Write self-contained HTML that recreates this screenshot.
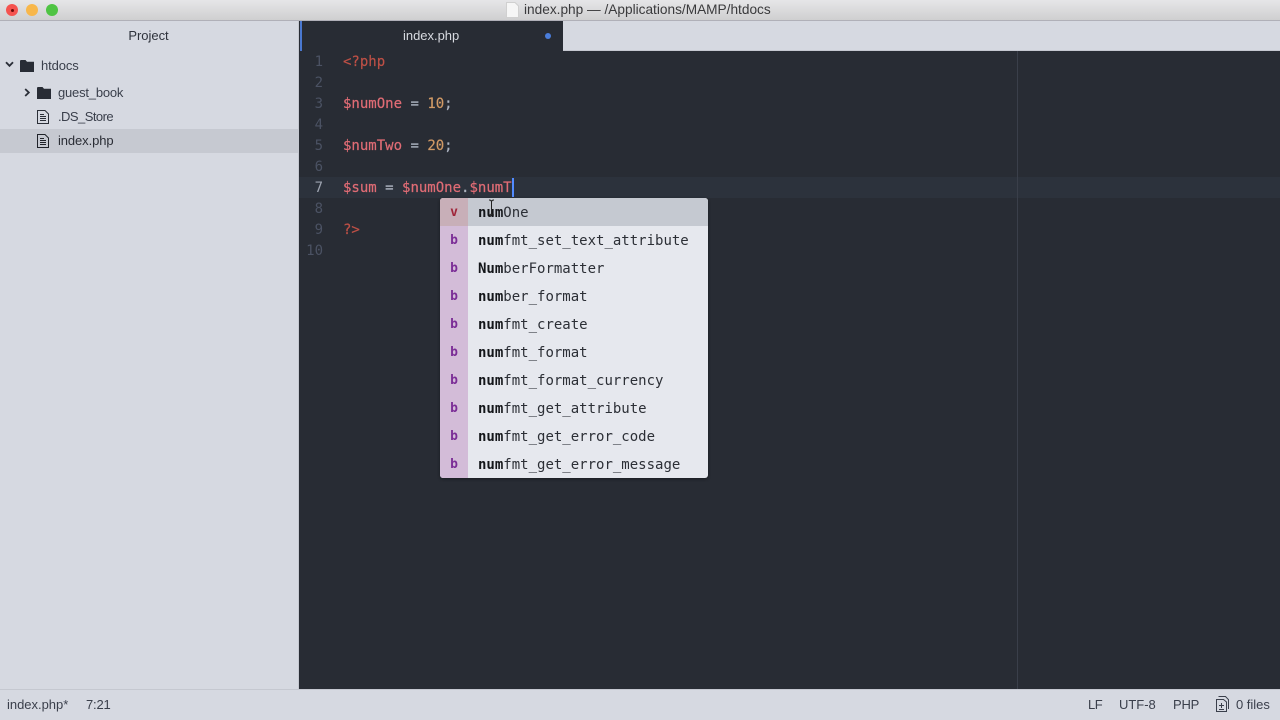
<!DOCTYPE html>
<html><head><meta charset="utf-8"><style>
html,body{margin:0;padding:0;width:1280px;height:720px;overflow:hidden;background:#282c34;font-family:"Liberation Sans",sans-serif}
.a{position:absolute;white-space:pre}
.m{font-family:"DejaVu Sans Mono","Liberation Mono",monospace;font-size:14px;line-height:21px;margin-top:1px;-webkit-text-stroke:.2px}
.r{color:#e06c75}.d{color:#be5046}.o{color:#d19a66}.w{color:#abb2bf}
.ln{color:#4b5263;width:24px;text-align:right;left:299px;-webkit-text-stroke:0}
.s{font-size:13px;line-height:20px;color:#3a3f4b;margin-top:1px;letter-spacing:-.02px}
.t{left:478px;color:#2c2f36;font-family:"DejaVu Sans Mono",monospace;font-size:14px;line-height:28px;margin-top:1px}
.t b{color:#14161a}
.k{left:440px;width:28px;text-align:center;font-family:"DejaVu Sans Mono",monospace;font-weight:bold;font-size:13px;line-height:28px;color:#7b2d96;margin-top:1px}
</style></head><body>
<!-- title bar -->
<div class="a" style="left:0;top:0;width:1280px;height:20px;background:linear-gradient(#e6e6e8,#cfcfd0);border-bottom:1px solid #b0b0b8"></div>
<div class="a" style="left:6px;top:4px;width:12px;height:12px;border-radius:50%;background:#f5534f"></div>
<div class="a" style="left:10.5px;top:8.5px;width:3px;height:3px;border-radius:50%;background:#6b0a08"></div>
<div class="a" style="left:26px;top:4px;width:12px;height:12px;border-radius:50%;background:#f8b74a"></div>
<div class="a" style="left:46px;top:4px;width:12px;height:12px;border-radius:50%;background:#4fc443"></div>
<svg class="a" style="left:506px;top:2px" width="13" height="16"><path d="M.5.5H9L12.5 4V15.5H.5Z" fill="#f6f6f6" stroke="#d0d0d0"/></svg>
<div class="a" style="left:524px;top:0;font-size:13.67px;line-height:20px;color:#3a3a3c">index.php — /Applications/MAMP/htdocs</div>
<!-- sidebar -->
<div class="a" style="left:0;top:21px;width:299px;height:668px;background:#d6d9e1"></div>
<div class="a" style="left:298px;top:21px;width:1px;height:668px;background:#c5c8d0"></div>
<div class="a s" style="left:0;width:297px;text-align:center;top:25px;color:#2f333c">Project</div>
<svg class="a" style="left:5px;top:61px" width="9" height="7"><path d="M1 1.2L4.5 4.8L8 1.2" fill="none" stroke="#2b2f38" stroke-width="1.8"/></svg>
<svg class="a" style="left:20px;top:60px" width="14" height="12"><path d="M0 1.2Q0 0 1 0H5.5L7 1.8H14V12H0Z" fill="#282c35"/></svg>
<div class="a s" style="left:41px;top:55px;letter-spacing:-.1px">htdocs</div>
<svg class="a" style="left:24px;top:88px" width="7" height="9"><path d="M1.2 1L4.8 4.5L1.2 8" fill="none" stroke="#2b2f38" stroke-width="1.8"/></svg>
<svg class="a" style="left:37px;top:87px" width="14" height="12"><path d="M0 1.2Q0 0 1 0H5.5L7 1.8H14V12H0Z" fill="#282c35"/></svg>
<div class="a s" style="left:58px;top:82px;letter-spacing:-.2px">guest_book</div>
<svg class="a" style="left:37px;top:110px" width="12" height="14"><path d="M.5.5H8L11.5 4V13.5H.5ZM3 4.5H7M3 6.5H9M3 8.5H9M3 10.5H9" fill="none" stroke="#2b2f38" stroke-width="1"/></svg>
<div class="a s" style="left:58px;top:106px;letter-spacing:-.55px">.DS_Store</div>
<div class="a" style="left:0;top:129px;width:298px;height:24px;background:#c6c9d1"></div>
<svg class="a" style="left:37px;top:134px" width="12" height="14"><path d="M.5.5H8L11.5 4V13.5H.5ZM3 4.5H7M3 6.5H9M3 8.5H9M3 10.5H9" fill="none" stroke="#1f2229" stroke-width="1"/></svg>
<div class="a s" style="left:58px;top:130px;color:#2a2d35;letter-spacing:-.1px">index.php</div>
<!-- tab bar -->
<div class="a" style="left:299px;top:21px;width:981px;height:30px;background:#d6d9e1;border-bottom:1px solid #c5c8d0;box-sizing:border-box"></div>
<div class="a" style="left:299px;top:21px;width:264px;height:30px;background:#282c34"></div>
<div class="a" style="left:300px;top:21px;width:2px;height:30px;background:#4a78d0"></div>
<div class="a s" style="left:403px;top:25px;color:#d7dae0">index.php</div>
<div class="a" style="left:545px;top:33px;width:6px;height:6px;border-radius:50%;background:#4a7ddb"></div>
<!-- editor -->
<div class="a" style="left:299px;top:177px;width:981px;height:21px;background:#2c323c"></div>
<div class="a" style="left:1017px;top:51px;width:1px;height:638px;background:#3a3f4a"></div>
<div class="a m ln" style="top:51px">1</div><div class="a m ln" style="top:72px">2</div><div class="a m ln" style="top:93px">3</div><div class="a m ln" style="top:114px">4</div><div class="a m ln" style="top:135px">5</div><div class="a m ln" style="top:156px">6</div><div class="a m ln" style="top:177px;color:#9da3af">7</div><div class="a m ln" style="top:198px">8</div><div class="a m ln" style="top:219px">9</div><div class="a m ln" style="top:240px">10</div>
<div class="a m d" style="left:343px;top:51px">&lt;?php</div>
<div class="a m" style="left:343px;top:93px"><span class="r">$numOne</span><span class="w"> = </span><span class="o">10</span><span class="w">;</span></div>
<div class="a m" style="left:343px;top:135px"><span class="r">$numTwo</span><span class="w"> = </span><span class="o">20</span><span class="w">;</span></div>
<div class="a m" style="left:343px;top:177px"><span class="r">$sum</span><span class="w"> = </span><span class="r">$numOne</span><span class="w">.</span><span class="r">$numT</span></div>
<div class="a" style="left:512px;top:178px;width:2px;height:19px;background:#528bff"></div>
<div class="a m d" style="left:343px;top:219px">?&gt;</div>
<!-- autocomplete -->
<div class="a" style="left:440px;top:198px;width:268px;height:280px;background:#e6e8ee;border-radius:3px;overflow:hidden;box-shadow:0 1px 3px rgba(0,0,0,.4)">
<div style="position:absolute;left:0;top:0;width:28px;height:280px;background:#d3bcd8"></div>
<div style="position:absolute;left:0;top:0;width:28px;height:28px;background:#c8afb8"></div>
<div style="position:absolute;left:28px;top:0;width:240px;height:28px;background:#c5c9d1"></div>
</div>
<div class="a k" style="top:198px;color:#a0263a">v</div><div class="a t" style="top:198px"><b>num</b>One</div>
<div class="a k" style="top:226px">b</div><div class="a t" style="top:226px"><b>num</b>fmt_set_text_attribute</div>
<div class="a k" style="top:254px">b</div><div class="a t" style="top:254px"><b>Num</b>berFormatter</div>
<div class="a k" style="top:282px">b</div><div class="a t" style="top:282px"><b>num</b>ber_format</div>
<div class="a k" style="top:310px">b</div><div class="a t" style="top:310px"><b>num</b>fmt_create</div>
<div class="a k" style="top:338px">b</div><div class="a t" style="top:338px"><b>num</b>fmt_format</div>
<div class="a k" style="top:366px">b</div><div class="a t" style="top:366px"><b>num</b>fmt_format_currency</div>
<div class="a k" style="top:394px">b</div><div class="a t" style="top:394px"><b>num</b>fmt_get_attribute</div>
<div class="a k" style="top:422px">b</div><div class="a t" style="top:422px"><b>num</b>fmt_get_error_code</div>
<div class="a k" style="top:450px">b</div><div class="a t" style="top:450px"><b>num</b>fmt_get_error_message</div>
<svg class="a" style="left:488px;top:199px" width="7" height="17"><path d="M1 1Q3.5 1 3.5 3V14Q3.5 16 6 16M6 1Q3.5 1 3.5 3M3.5 14Q3.5 16 1 16" fill="none" stroke="#222" stroke-width="1"/></svg>
<!-- status bar -->
<div class="a" style="left:0;top:689px;width:1280px;height:31px;background:#d6d9e1;border-top:1px solid #c5c8d0;box-sizing:border-box"></div>
<div class="a s" style="left:7px;top:694px">index.php*</div>
<div class="a s" style="left:86px;top:694px;letter-spacing:-.2px">7:21</div>
<div class="a s" style="left:1088px;top:694px;letter-spacing:-.5px">LF</div>
<div class="a s" style="left:1119px;top:694px">UTF-8</div>
<div class="a s" style="left:1173px;top:694px;letter-spacing:-.2px">PHP</div>
<svg class="a" style="left:1216px;top:696px" width="14" height="16"><path d="M.5 3.5H7.5L10.5 6V15.5H.5ZM3 1V.5H9.5L12.5 3.7V13M3 9.5H8M5.5 7V12M3 13.5H8" fill="none" stroke="#3a3f4b" stroke-width="1"/></svg>
<div class="a s" style="left:1236px;top:694px">0 files</div>
</body></html>
